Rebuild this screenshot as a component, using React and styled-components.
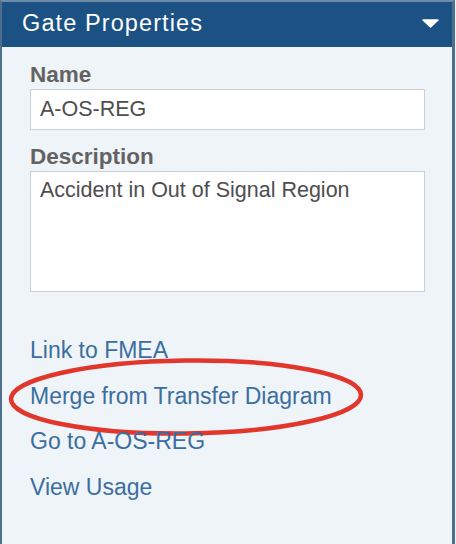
import styled, { createGlobalStyle } from "styled-components";

const GlobalStyle = createGlobalStyle`
  html, body {
    margin: 0;
    padding: 0;
    background: #eef3f7;
  }
  body {
    font-family: "Liberation Sans", Arial, sans-serif;
  }
`;

const Panel = styled.div`
  width: 455px;
  height: 544px;
  box-sizing: border-box;
  border-top: 2px solid #6d8aa8;
  border-left: 2px solid #4f6e8d;
  border-right: 3px solid #4f6e8d;
  background: #eff4f8;
`;

const Header = styled.div`
  display: flex;
  align-items: center;
  justify-content: space-between;
  height: 45px;
  box-sizing: border-box;
  padding: 0 13px 3px 20px;
  background: #1b5283;
  color: #fff;
`;

const Title = styled.h2`
  margin: 0;
  font-size: 23.5px;
  font-weight: 400;
  letter-spacing: 1.1px;
  line-height: 42px;
`;

const Body = styled.div`
  padding: 17px 27px 0 28px;
`;

const Label = styled.div`
  margin: ${(p) => (p.$first ? "0" : "16px")} 0 3px;
  font-size: 22.5px;
  font-weight: 700;
  line-height: 22px;
  color: #636363;
`;

const TextField = styled.input`
  display: block;
  width: 100%;
  height: 41px;
  box-sizing: border-box;
  margin: 0;
  padding: 0 9px;
  border: 1px solid #c9d0d7;
  background: #fff;
  font-family: "Liberation Sans", Arial, sans-serif;
  font-size: 21.5px;
  color: #4e4e4e;
  outline: none;
`;

const TextArea = styled.textarea`
  display: block;
  width: 100%;
  height: 121px;
  box-sizing: border-box;
  margin: 0;
  padding: 6px 9px;
  border: 1px solid #c9d0d7;
  background: #fff;
  font-family: "Liberation Sans", Arial, sans-serif;
  font-size: 21.5px;
  line-height: 1.2;
  color: #4e4e4e;
  resize: none;
  outline: none;
`;

const Links = styled.div`
  margin-top: 36px;
`;

const LinkItem = styled.div`
  position: relative;
`;

const ActionLink = styled.a`
  display: inline-block;
  font-size: 23px;
  line-height: 45.7px;
  color: #3b6e9f;
  text-decoration: none;
  cursor: pointer;
`;

const Circle = styled.svg`
  position: absolute;
  left: -22px;
  top: -16px;
  pointer-events: none;
  overflow: visible;
`;

const Caret = () => (
  <svg width="17" height="9" viewBox="0 0 17 9">
    <path d="M1 1 L16 1 L8.5 8 Z" fill="#fff" stroke="#fff" strokeWidth="1.5" strokeLinejoin="round" />
  </svg>
);

const links = ["Link to FMEA", "Merge from Transfer Diagram", "Go to A-OS-REG", "View Usage"];

const App = () => {
  return (
    <>
      <GlobalStyle />
      <Panel>
        <Header>
          <Title>Gate Properties</Title>
          <Caret />
        </Header>
        <Body>
          <Label $first>Name</Label>
          <TextField defaultValue="A-OS-REG" readOnly />
          <Label>Description</Label>
          <TextArea defaultValue="Accident in Out of Signal Region" readOnly />
          <Links>
            {links.map((name, i) => (
              <LinkItem key={name}>
                <ActionLink>{name}</ActionLink>
                {i === 1 && (
                  <Circle width="356" height="78" viewBox="0 0 356 78">
                    <ellipse
                      cx="178"
                      cy="39"
                      rx="175"
                      ry="36.5"
                      fill="none"
                      stroke="#e2352b"
                      strokeWidth="4.5"
                      transform="rotate(-0.7 178 39)"
                    />
                  </Circle>
                )}
              </LinkItem>
            ))}
          </Links>
        </Body>
      </Panel>
    </>
  );
};

export default App;
